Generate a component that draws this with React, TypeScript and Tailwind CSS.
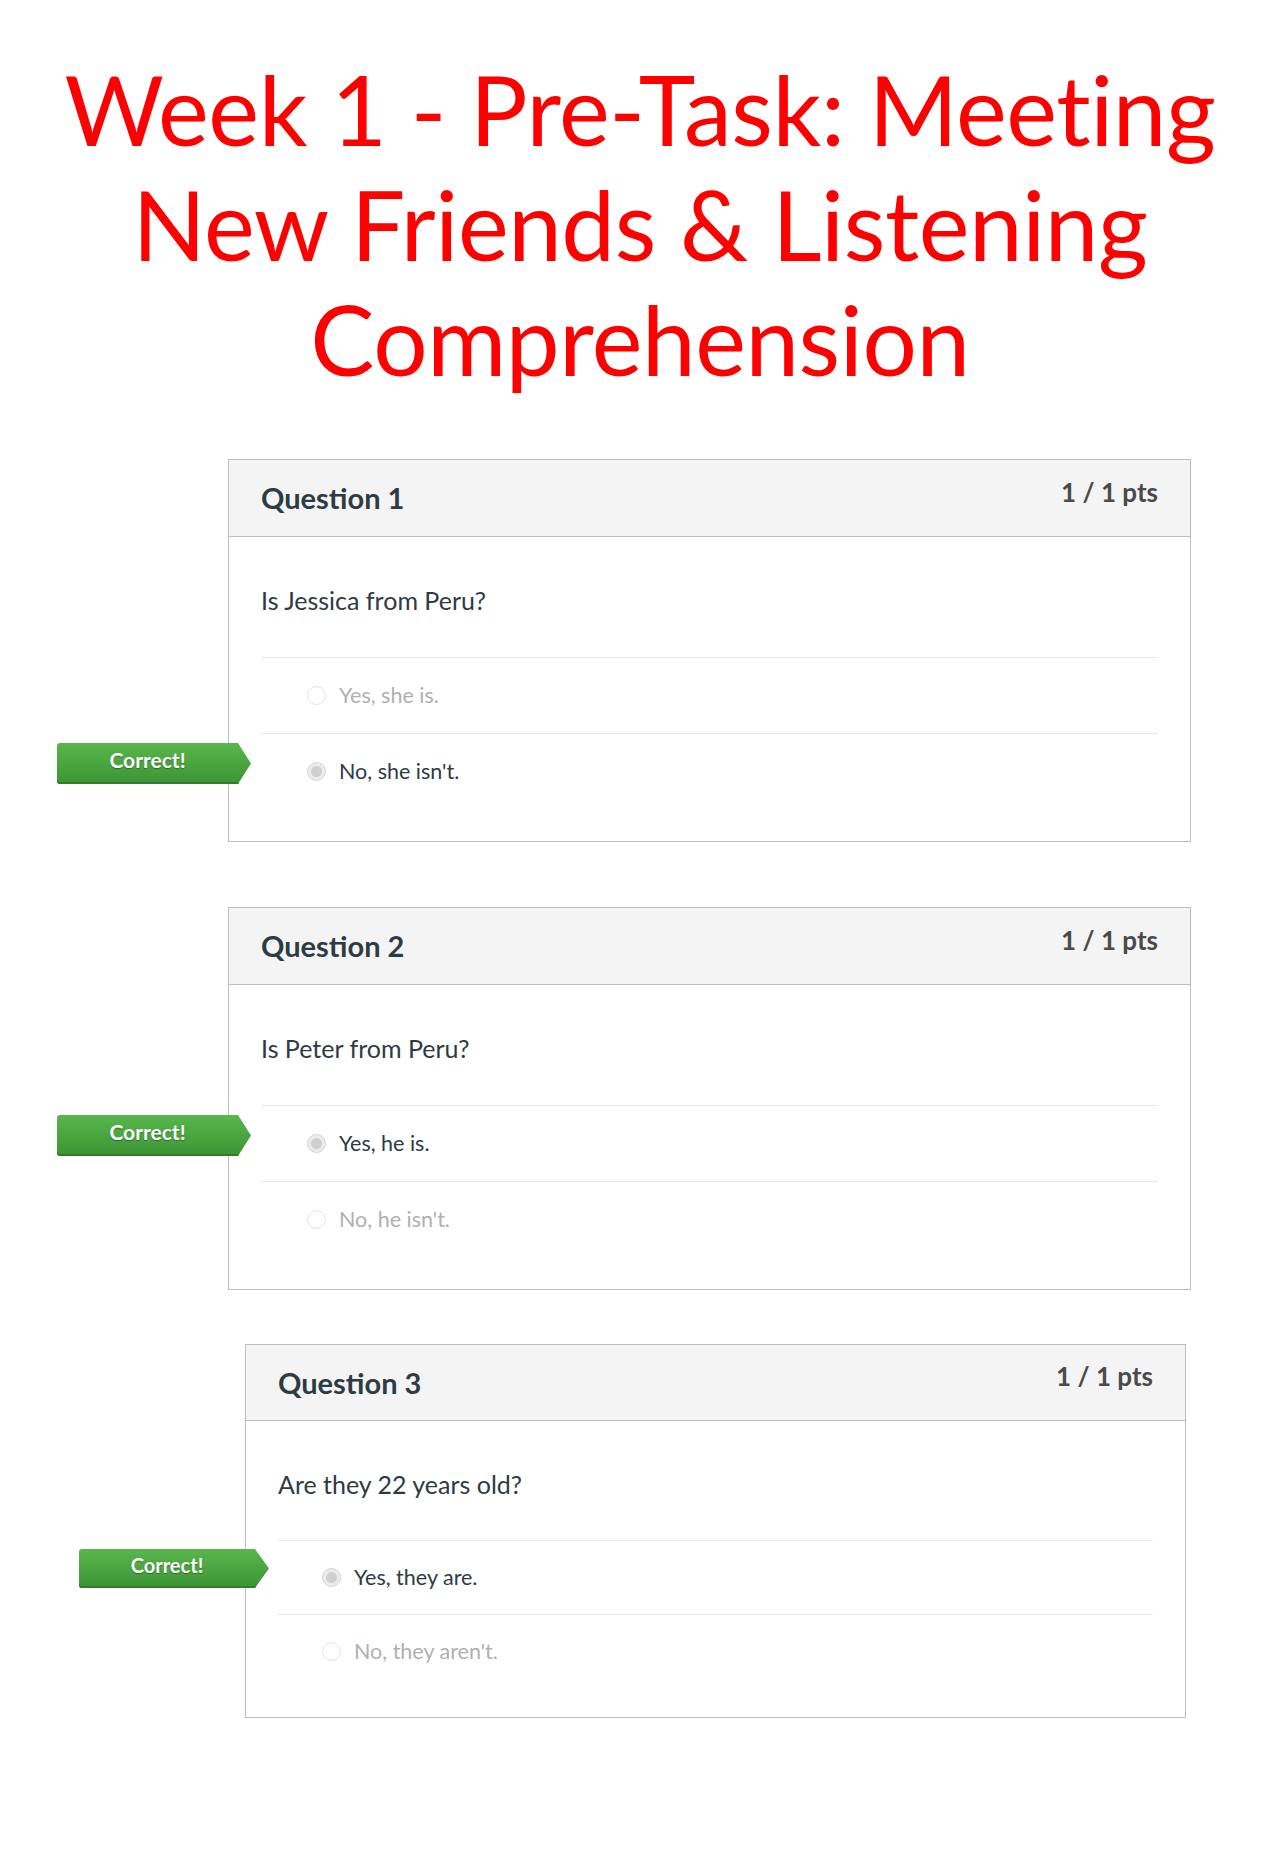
import React from "react";

type Answer = { text: string; selected: boolean };
type Q = {
  title: string;
  question: string;
  answers: Answer[];
  compact?: boolean;
};

const questions: Q[] = [
  {
    title: "Question 1",
    question: "Is Jessica from Peru?",
    answers: [
      { text: "Yes, she is.", selected: false },
      { text: "No, she isn't.", selected: true },
    ],
  },
  {
    title: "Question 2",
    question: "Is Peter from Peru?",
    answers: [
      { text: "Yes, he is.", selected: true },
      { text: "No, he isn't.", selected: false },
    ],
  },
  {
    title: "Question 3",
    question: "Are they 22 years old?",
    answers: [
      { text: "Yes, they are.", selected: true },
      { text: "No, they aren't.", selected: false },
    ],
    compact: true,
  },
];

function Badge({ compact }: { compact?: boolean }) {
  return (
    <div
      className={
        compact
          ? "absolute left-[-199px] top-[8px] h-[39px] w-[190px] rounded-l-[3px] bg-gradient-to-b from-[#58b74c] to-[#3c9434] shadow-[inset_0_-2px_0_#2f7d2b] [clip-path:polygon(0_0,176px_0,190px_50%,176px_100%,0_100%)]"
          : "absolute left-[-204px] top-[9px] h-[41px] w-[194px] rounded-l-[3px] bg-gradient-to-b from-[#58b74c] to-[#3c9434] shadow-[inset_0_-2px_0_#2f7d2b] [clip-path:polygon(0_0,181px_0,194px_50%,181px_100%,0_100%)]"
      }
    >
      <div
        className={
          compact
            ? "flex h-full w-[176px] items-center justify-center pb-[7px] text-[20px] font-bold text-white [text-shadow:0_1px_1px_rgba(0,0,0,0.35)]"
            : "flex h-full w-[181px] items-center justify-center pb-[7px] text-[21px] font-bold text-white [text-shadow:0_1px_1px_rgba(0,0,0,0.35)]"
        }
      >
        Correct!
      </div>
    </div>
  );
}

function Radio({ selected }: { selected: boolean }) {
  return selected ? (
    <span className="flex h-[19px] w-[19px] shrink-0 items-center justify-center rounded-full border border-[#d4d4d4] bg-[#ececec]">
      <span className="h-[11px] w-[11px] rounded-full bg-[#cfcfcf]" />
    </span>
  ) : (
    <span className="h-[19px] w-[19px] shrink-0 rounded-full border border-[#e3e3e3] bg-white" />
  );
}

function Card({ q }: { q: Q }) {
  const c = q.compact;
  return (
    <div
      className={
        c
          ? "ml-[245px] mt-[54px] w-[941px] border border-[#bdbdbd] bg-white"
          : "ml-[228px] w-[963px] border border-[#bdbdbd] bg-white"
      }
    >
      <div
        className={
          c
            ? "flex h-[76px] items-center justify-between border-b border-[#bdbdbd] bg-[#f4f4f4] px-8"
            : "flex h-[77px] items-center justify-between border-b border-[#bdbdbd] bg-[#f4f4f4] px-8"
        }
      >
        <span className="text-[29px] font-bold text-[#2d3b45]">{q.title}</span>
        <span className="mb-[12px] text-[26px] font-bold text-[#4a4a4a]">1 / 1 pts</span>
      </div>
      <div className={c ? "px-8 pb-[29px] pt-[47px]" : "px-8 pb-[32px] pt-[47px]"}>
        <p
          className={
            c
              ? "mb-[40px] text-[25px] leading-[32px] text-[#2d3b45]"
              : "mb-[41px] text-[25px] leading-[32px] text-[#2d3b45]"
          }
        >
          {q.question}
        </p>
        {q.answers.map((a) => (
          <div
            key={a.text}
            className={
              c
                ? "relative flex h-[74px] items-center border-t border-[#e8e8e8] pl-[44px]"
                : "relative flex h-[76px] items-center border-t border-[#e8e8e8] pl-[46px]"
            }
          >
            {a.selected && <Badge compact={c} />}
            <Radio selected={a.selected} />
            <span
              className={
                a.selected
                  ? "ml-[13px] text-[21.5px] text-[#2d3b45]"
                  : "ml-[13px] text-[21.5px] text-[#b0b0b0]"
              }
            >
              {a.text}
            </span>
          </div>
        ))}
      </div>
    </div>
  );
}

export default function App() {
  return (
    <div className="min-h-[1849px] w-[1280px] bg-white font-['Lato',sans-serif]">
      <h1 className="pt-[51px] text-center text-[96px] leading-[115px] tracking-[-0.4px] text-[#ff0000]">
        Week 1 - Pre-Task: Meeting
        <br />
        New Friends &amp; Listening
        <br />
        Comprehension
      </h1>
      <div className="mt-[63px]">
        <Card q={questions[0]} />
        <div className="mt-[65px]">
          <Card q={questions[1]} />
        </div>
        <Card q={questions[2]} />
      </div>
    </div>
  );
}
